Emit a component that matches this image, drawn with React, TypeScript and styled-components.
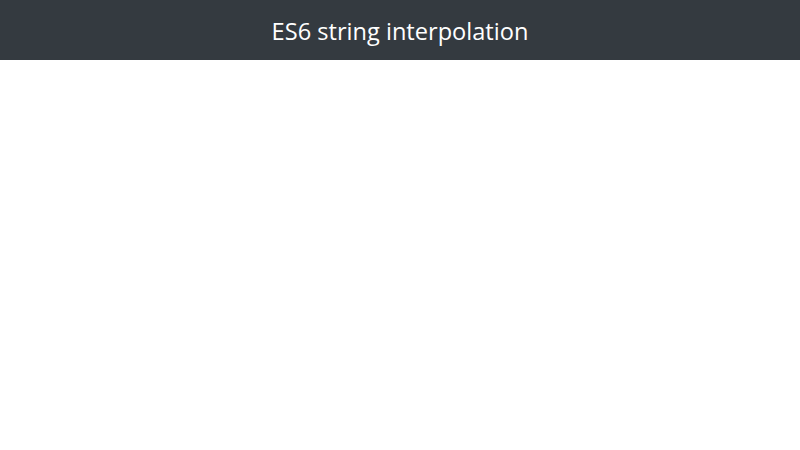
import React from "react";
import styled, { createGlobalStyle } from "styled-components";

const GlobalStyle = createGlobalStyle`
  html, body {
    margin: 0;
    padding: 0;
    background: #ffffff;
  }
`;

const Header = styled.header`
  box-sizing: border-box;
  height: 60px;
  padding-top: 4px;
  background: #343a40;
  display: flex;
  align-items: center;
  justify-content: center;
`;

const Title = styled.h1`
  margin: 0;
  color: #ffffff;
  font-family: "Open Sans", "Noto Sans", sans-serif;
  font-weight: 400;
  font-size: 23.6px;
  line-height: 1;
`;

export default function App() {
  return (
    <>
      <GlobalStyle />
      <Header>
        <Title>ES6 string interpolation</Title>
      </Header>
    </>
  );
}
